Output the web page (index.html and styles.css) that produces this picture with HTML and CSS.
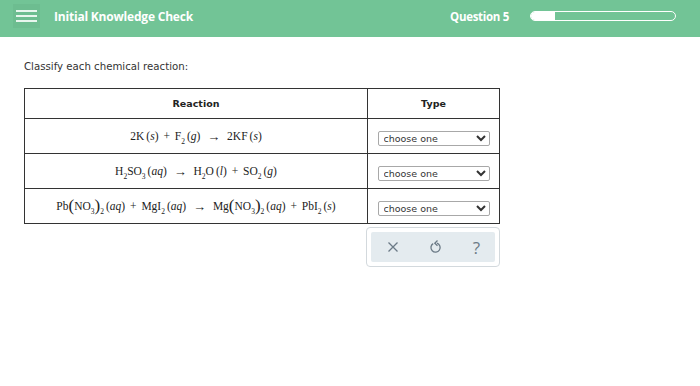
FILE: index.html
```html
<!DOCTYPE html>
<html lang="en">
<head>
<meta charset="UTF-8">
<meta name="viewport" content="width=device-width, initial-scale=1.0">
<title>Initial Knowledge Check</title>
<link rel="stylesheet" href="styles.css">
</head>
<body>

<header class="topbar">
  <div class="menu-btn">
    <span></span><span></span><span></span>
  </div>
  <div class="title">Initial Knowledge Check</div>
  <div class="question">Question 5</div>
  <div class="progress"><div class="progress-fill" style="width: 17%"></div></div>
</header>

<main class="content">
  <p class="prompt">Classify each chemical reaction:</p>

  <div class="work">
    <table class="reactions">
      <tr>
        <th class="col-reaction">Reaction</th>
        <th class="col-type">Type</th>
      </tr>
      <tr>
        <td class="eq">2K<span class="st">(<i>s</i>)</span> + F<sub>2</sub><span class="st">(<i>g</i>)</span> <span class="arr">&#8594;</span> 2KF<span class="st">(<i>s</i>)</span></td>
        <td class="pick"><select><option>choose one</option></select></td>
      </tr>
      <tr>
        <td class="eq">H<sub>2</sub>SO<sub>3</sub><span class="st">(<i>aq</i>)</span> <span class="arr">&#8594;</span> H<sub>2</sub>O<span class="st">(<i>l</i>)</span> + SO<sub>2</sub><span class="st">(<i>g</i>)</span></td>
        <td class="pick"><select><option>choose one</option></select></td>
      </tr>
      <tr>
        <td class="eq">Pb<span class="big">(</span>NO<sub>3</sub><span class="big">)</span><sub>2</sub><span class="st">(<i>aq</i>)</span> + MgI<sub>2</sub><span class="st">(<i>aq</i>)</span> <span class="arr">&#8594;</span> Mg<span class="big">(</span>NO<sub>3</sub><span class="big">)</span><sub>2</sub><span class="st">(<i>aq</i>)</span> + PbI<sub>2</sub><span class="st">(<i>s</i>)</span></td>
        <td class="pick"><select><option>choose one</option></select></td>
      </tr>
    </table>

    <div class="tools">
      <div class="tools-inner">
        <svg class="tool" width="14" height="14" viewBox="0 0 14 14"><path d="M2.5 2.5 L11.5 11.5 M11.5 2.5 L2.5 11.5" stroke="#6b7a86" stroke-width="1.3" fill="none"/></svg>
        <svg class="tool" width="14" height="16" viewBox="0 0 14 16"><path d="M4.2 4.6 A4.6 4.6 0 1 0 8 4.2" stroke="#6b7a86" stroke-width="1.3" fill="none"/><path d="M8.5 1.5 L5.8 4.3 L8.5 6.8" stroke="#6b7a86" stroke-width="1.3" fill="none"/></svg>
        <span class="tool help">?</span>
      </div>
    </div>
  </div>
</main>

</body>
</html>
```

FILE: styles.css
```css
body {
  margin: 0;
  font-family: "DejaVu Sans", Verdana, sans-serif;
  background: #fff;
  color: #333;
}

.topbar {
  height: 37px;
  background: #72c496;
  display: flex;
  align-items: center;
  padding: 0 0 5px 0;
  box-sizing: border-box;
  color: #fff;
  font-family: "Open Sans", sans-serif;
  font-weight: 700;
}

.menu-btn {
  width: 21px;
  height: 24px;
  margin-left: 13px;
  background: #6dbd90;
  display: flex;
  flex-direction: column;
  justify-content: center;
  gap: 3px;
  padding: 0 3px;
}

.menu-btn span {
  display: block;
  height: 2px;
  background: #e8f6ee;
}

.title {
  margin-left: 14px;
  font-size: 12px;
  letter-spacing: -0.2px;
  flex: 1;
}

.question {
  font-size: 11.5px;
  letter-spacing: -0.3px;
  margin-right: 21px;
}

.progress {
  width: 144px;
  height: 8px;
  border: 1.5px solid #fff;
  border-radius: 6px;
  margin-right: 24px;
  overflow: hidden;
}

.progress-fill {
  height: 100%;
  background: #fff;
}

.content {
  padding: 0 24px;
}

.prompt {
  margin: 24px 0 16px;
  font-size: 10.2px;
  color: #333;
}

.work {
  width: 476px;
}

.reactions {
  width: 476px;
  border-collapse: collapse;
  border: 1px solid #333;
}

.reactions th,
.reactions td {
  border: 1px solid #333;
  padding: 0;
  text-align: center;
}

.reactions th {
  height: 29px;
  font-size: 9.5px;
  font-weight: 700;
  color: #222;
}

.col-reaction {
  width: 342px;
}

.reactions td {
  height: 34px;
}

.eq {
  font-family: "Liberation Serif", "Times New Roman", serif;
  font-size: 11.5px;
  color: #222;
  word-spacing: 2px;
}

.eq sub {
  font-size: 7.5px;
  vertical-align: -4px;
  line-height: 0;
}

.eq .st {
  margin-left: 2px;
}

.eq .arr {
  font-size: 13px;
  margin: 0 2px;
  vertical-align: -1px;
  line-height: 0;
}

.eq .big {
  font-size: 17px;
  line-height: 0;
  vertical-align: -1px;
}

.pick select {
  width: 112px;
  height: 15px;
  font-family: "DejaVu Sans", Verdana, sans-serif;
  font-size: 9.5px;
  color: #333;
  border: 1px solid #a8a8a8;
  border-radius: 2px;
  padding: 0 1px;
  background: #fff;
}

.tools {
  width: 134px;
  margin: 3px 0 0 auto;
  border: 1px solid #d3d9dd;
  border-radius: 4px;
  padding: 4px;
  box-sizing: border-box;
  background: #fff;
}

.tools-inner {
  height: 30px;
  background: #e4ebef;
  border-radius: 2px;
  display: flex;
  align-items: center;
  justify-content: space-around;
}

.help {
  font-family: "Open Sans", sans-serif;
  font-size: 17px;
  color: #6b7a86;
  line-height: 1;
}
```
